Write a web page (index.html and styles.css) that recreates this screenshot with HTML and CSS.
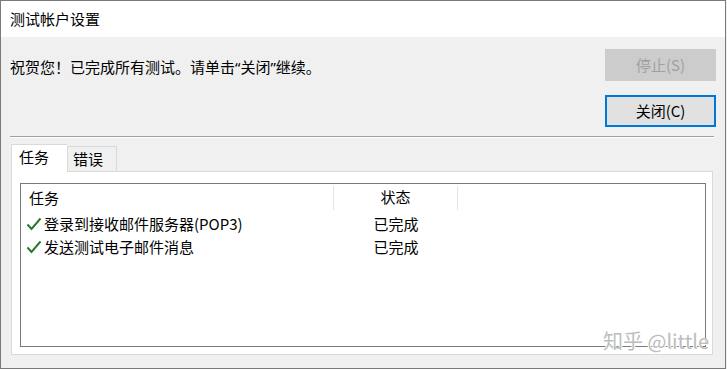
FILE: index.html
```html
<!DOCTYPE html>
<html lang="zh-CN">
<head>
    <meta charset="UTF-8">
    <title>测试帐户设置</title>
    <link rel="stylesheet" href="styles.css">
</head>
<body>
    <div class="dialog">
        <div class="titlebar">测试帐户设置</div>
        <div class="content">
            <div class="top">
                <p class="msg">祝贺您！已完成所有测试。请单击<span class="q">“</span>关闭<span class="q">”</span>继续。</p>
                <div class="buttons">
                    <button class="btn disabled">停止(S)</button>
                    <button class="btn default">关闭(C)</button>
                </div>
            </div>
            <div class="sep"></div>

            <div class="tabs">
                <div class="tab active">任务</div>
                <div class="tab">错误</div>
            </div>
            <div class="panel">
                <div class="list">
                    <div class="list-head">
                        <div class="col-task">任务</div>
                        <div class="col-state">状态</div>
                        <div class="col-rest"></div>
                    </div>
                    <div class="row">
                        <div class="col-task">
                            <svg class="check" width="16" height="14" viewBox="0 0 16 14"><path d="M1.5 7.5 L5.5 12 L14.5 1.5" fill="none" stroke="#2b7a2b" stroke-width="2"/></svg>
                            登录到接收邮件服务器(POP3)
                        </div>
                        <div class="col-state">已完成</div>
                    </div>
                    <div class="row">
                        <div class="col-task">
                            <svg class="check" width="16" height="14" viewBox="0 0 16 14"><path d="M1.5 7.5 L5.5 12 L14.5 1.5" fill="none" stroke="#2b7a2b" stroke-width="2"/></svg>
                            发送测试电子邮件消息
                        </div>
                        <div class="col-state">已完成</div>
                    </div>
                </div>
            </div>
        </div>
        <div class="watermark">知乎 @little</div>
    </div>
</body>
</html>
```

FILE: styles.css
```css
* {
    box-sizing: border-box;
}

body {
    margin: 0;
    background: #f0f0f0;
    font-family: "Noto Sans CJK SC", "Noto Sans", sans-serif;
    font-size: 15px;
    color: #000;
}

.dialog {
    position: relative;
    width: 726px;
    height: 369px;
    border: 1px solid #7a7a7a;
    background: #f0f0f0;
    display: flex;
    flex-direction: column;
}

.titlebar {
    height: 36px;
    line-height: 35px;
    padding-left: 9px;
    background: #fff;
}

.content {
    flex: 1;
}

.top {
    display: flex;
    justify-content: space-between;
    padding: 12px 9px 0 9px;
}

.msg {
    margin: 7px 0 0 0;
    line-height: 22px;
}

.q {
    font-family: "Noto Sans", sans-serif;
}

.buttons {
    display: flex;
    flex-direction: column;
    gap: 14px;
}

.btn {
    width: 111px;
    height: 32px;
    font-family: inherit;
    font-size: 15px;
    padding: 0;
    line-height: 28px;
}

.btn.disabled {
    background: #cccccc;
    border: 1px solid #cccccc;
    color: #a0a0a0;
}

.btn.default {
    background: #e1e1e1;
    border: 2px solid #0078d7;
    color: #000;
}

.sep {
    margin: 9px 11px 0 9px;
    height: 2px;
    border-top: 1px solid #a0a0a0;
    border-bottom: 1px solid #fff;
}

.tabs {
    display: flex;
    align-items: flex-end;
    margin: 5px 0 0 10px;
    height: 28px;
}

.tab {
    height: 25px;
    line-height: 24px;
    width: 50px;
    padding: 0 0 0 5px;
    border: 1px solid #d9d9d9;
    border-bottom: none;
    background: #f0f0f0;
    white-space: nowrap;
}

.tab.active {
    height: 28px;
    width: 56px;
    line-height: 23px;
    padding: 0 0 0 7px;
    background: #fff;
    border-right: none;
    position: relative;
    z-index: 1;
    margin-bottom: -1px;
}

.panel {
    margin: 0 12px 0 10px;
    height: 184px;
    background: #fff;
    border: 1px solid #d9d9d9;
    padding: 11px 6px 7px 8px;
}

.list {
    height: 100%;
    border: 1px solid #7a7a7a;
}

.list-head {
    display: flex;
    height: 28px;
    padding-top: 2px;
    line-height: 22px;
}

.list-head .col-task {
    border-right: 1px solid #e5e5e5;
    height: 24px;
}

.list-head .col-state {
    border-right: 1px solid #e5e5e5;
    height: 24px;
}

.col-task {
    width: 313px;
    padding-left: 8px;
    display: flex;
    align-items: center;
}

.col-state {
    width: 124px;
    text-align: center;
}

.row {
    display: flex;
    height: 23px;
    line-height: 23px;
}

.row .col-task {
    padding-left: 5px;
}

.check {
    margin-right: 2px;
}

.watermark {
    position: absolute;
    right: 16px;
    bottom: 15px;
    font-size: 20px;
    line-height: 24px;
    color: #bdbdbd;
    text-shadow: 1px 1px 0 #fff, -1px 0 0 #fff;
}
```
